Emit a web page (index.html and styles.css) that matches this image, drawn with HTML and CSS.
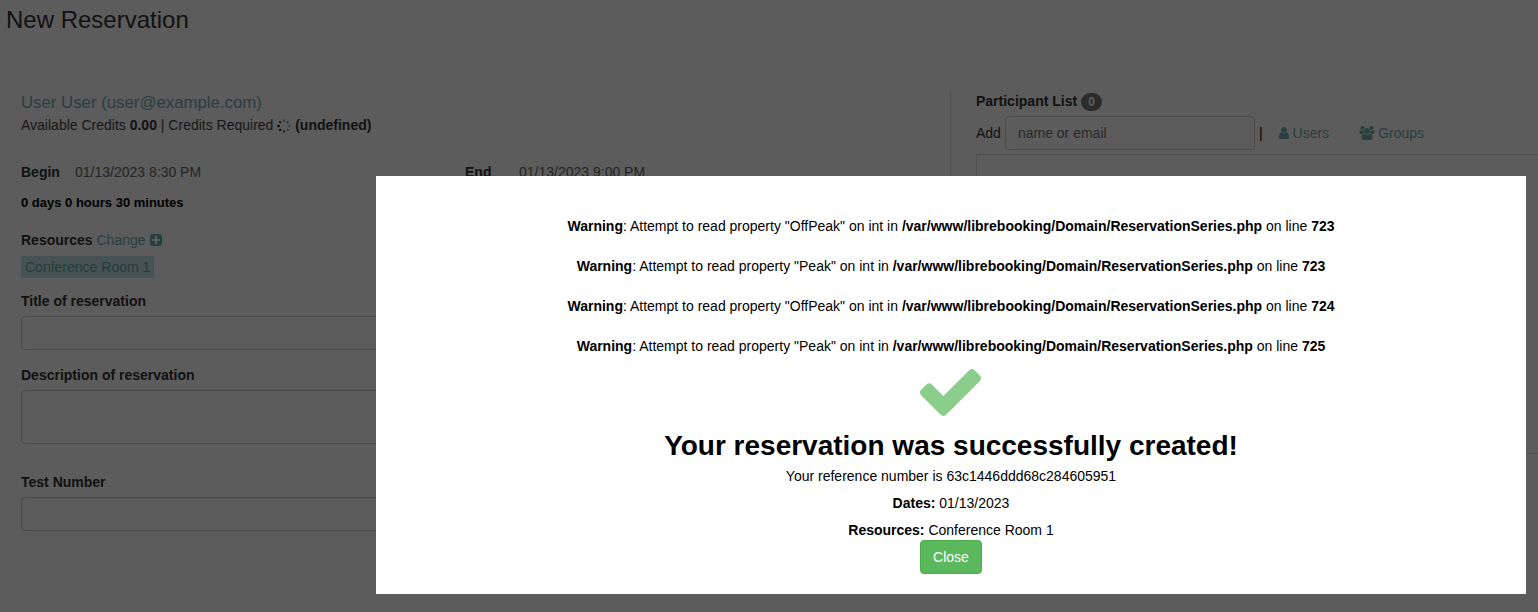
FILE: index.html
```html
<!DOCTYPE html>
<html lang="en">
<head>
    <meta charset="UTF-8">
    <title>New Reservation</title>
    <link rel="stylesheet" href="styles.css">
</head>
<body>
    <div class="page">
        <h1>New Reservation</h1>

        <div class="reservation">
            <div class="details">
                <div class="user-name">User User (user@example.com)</div>
                <div class="credits">
                    Available Credits <b>0.00</b> | Credits Required
                    <svg class="spinner" viewBox="0 0 16 16">
                        <circle cx="8" cy="1.8" r="1.2" fill="#777"/>
                        <circle cx="12.4" cy="3.6" r="1.2" fill="#888"/>
                        <circle cx="14.2" cy="8" r="1.2" fill="#888"/>
                        <circle cx="12.4" cy="12.4" r="1.2" fill="#777"/>
                        <circle cx="8" cy="14.2" r="1.3" fill="#333"/>
                        <circle cx="3.6" cy="12.4" r="1.4" fill="#111"/>
                        <circle cx="1.8" cy="8" r="1.4" fill="#000"/>
                        <circle cx="3.6" cy="3.6" r="1.3" fill="#333"/>
                    </svg>
                    <b>(undefined)</b>
                </div>

                <div class="dates">
                    <div class="date"><label>Begin</label><span>01/13/2023 8:30 PM</span></div>
                    <div class="date"><label>End</label><span>01/13/2023 9:00 PM</span></div>
                </div>
                <div class="duration">0 days 0 hours 30 minutes</div>

                <div class="resources">
                    <label>Resources</label>
                    <a href="#">Change</a>
                    <svg class="icon" viewBox="0 0 1792 1792"><path d="M1408 960v-128q0-26-19-45t-45-19h-320v-320q0-26-19-45t-45-19h-128q-26 0-45 19t-19 45v320h-320q-26 0-45 19t-19 45v128q0 26 19 45t45 19h320v320q0 26 19 45t45 19h128q26 0 45-19t19-45v-320h320q26 0 45-19t19-45zm256-544v960q0 119-84.5 203.5t-203.5 84.5h-960q-119 0-203.5-84.5t-84.5-203.5v-960q0-119 84.5-203.5t203.5-84.5h960q119 0 203.5 84.5t84.5 203.5z"/></svg>
                </div>
                <div class="tag">Conference Room 1</div>

                <div class="field title-field">
                    <label>Title of reservation</label>
                    <input type="text" class="form-control">
                </div>
                <div class="field">
                    <label>Description of reservation</label>
                    <textarea class="form-control"></textarea>
                </div>
                <div class="field test-field">
                    <label>Test Number</label>
                    <input type="text" class="form-control">
                </div>
            </div>

            <div class="participants">
                <div class="participant-title"><label>Participant List</label><span class="badge">0</span></div>
                <div class="participant-add">
                    <span>Add</span>
                    <input type="text" class="form-control add-input" placeholder="name or email">
                    <span class="divider">|</span>
                    <a href="#" class="users-link">
                        <svg class="icon" viewBox="0 0 1792 1792"><path d="M1536 1399q0 109-62.5 187t-150.5 78h-854q-88 0-150.5-78t-62.5-187q0-85 8.5-160.5t31.5-152 58.5-131 94-89 134.5-34.5q131 128 313 128t313-128q76 0 134.5 34.5t94 89 58.5 131 31.5 152 8.5 160.5zm-256-887q0 159-112.5 271.5t-271.5 112.5-271.5-112.5-112.5-271.5 112.5-271.5 271.5-112.5 271.5 112.5 112.5 271.5z"/></svg>Users</a>
                    <a href="#" class="groups-link">
                        <svg class="icon icon-wide" viewBox="0 0 2048 1792"><path d="M657 896q-162 5-265 128h-134q-82 0-138-40.5t-56-118.5q0-353 124-353 6 0 43.5 21t97.5 42.5 119 21.5q67 0 133-23-5 37-5 66 0 139 81 256zm1071 637q0 120-73 189.5t-194 69.5h-874q-121 0-194-69.5t-73-189.5q0-53 3.5-103.5t14-109 26.5-108.5 43-97.5 62-81 85.5-53.5 111.5-20q10 0 43 21.5t73 48 107 48 135 21.5 135-21.5 107-48 73-48 43-21.5q61 0 111.5 20t85.5 53.5 62 81 43 97.5 26.5 108.5 14 109 3.5 103.5zm-1024-1277q0 106-75 181t-181 75-181-75-75-181 75-181 181-75 181 75 75 181zm704 384q0 159-112.5 271.5t-271.5 112.5-271.5-112.5-112.5-271.5 112.5-271.5 271.5-112.5 271.5 112.5 112.5 271.5zm576 225q0 78-56 118.5t-138 40.5h-134q-103-123-265-128 81-117 81-256 0-29-5-66 66 23 133 23 59 0 119-21.5t97.5-42.5 43.5-21q124 0 124 353zm-128-609q0 106-75 181t-181 75-181-75-75-181 75-181 181-75 181 75 75 181z"/></svg>Groups</a>
                </div>
                <div class="participant-box"></div>
            </div>
        </div>
    </div>

    <div class="overlay"></div>

    <div class="modal">
        <p><b>Warning</b>: Attempt to read property "OffPeak" on int in <b>/var/www/librebooking/Domain/ReservationSeries.php</b> on line <b>723</b></p>
        <p><b>Warning</b>: Attempt to read property "Peak" on int in <b>/var/www/librebooking/Domain/ReservationSeries.php</b> on line <b>723</b></p>
        <p><b>Warning</b>: Attempt to read property "OffPeak" on int in <b>/var/www/librebooking/Domain/ReservationSeries.php</b> on line <b>724</b></p>
        <p><b>Warning</b>: Attempt to read property "Peak" on int in <b>/var/www/librebooking/Domain/ReservationSeries.php</b> on line <b>725</b></p>
        <svg class="check" viewBox="121 334 1550 1188"><path d="M1671 566q0 40-28 68l-724 724-136 136q-28 28-68 28t-68-28l-136-136-362-362q-28-28-28-68t28-68l136-136q28-28 68-28t68 28l294 295 656-657q28-28 68-28t68 28l136 136q28 28 28 68z"/></svg>
        <h2>Your reservation was successfully created!</h2>
        <div class="result-line">Your reference number is 63c1446ddd68c284605951</div>
        <div class="result-line"><b>Dates:</b> 01/13/2023</div>
        <div class="result-line"><b>Resources:</b> Conference Room 1</div>
        <button class="btn-close">Close</button>
    </div>
</body>
</html>
```

FILE: styles.css
```css
* {
    box-sizing: border-box;
}
html, body {
    height: 100%;
    overflow: hidden;
}
body {
    margin: 0;
    font-family: "Liberation Sans", Arial, sans-serif;
    font-size: 14px;
    line-height: 20px;
    color: #333;
    background-color: #fff;
}
a {
    color: #70b0b0;
    text-decoration: none;
}
label {
    font-weight: bold;
}
h1 {
    margin: 0;
    padding: 6px 0 0 6px;
    font-size: 24px;
    line-height: 28px;
    font-weight: normal;
    color: #333;
}
.reservation {
    display: grid;
    grid-template-columns: 950px 1fr;
    margin-top: 56px;
}
.details {
    padding: 1px 0 0 21px;
}
.user-name {
    font-size: 16.8px;
    line-height: 24px;
    color: #70b0b0;
}
.credits {
    color: #444;
}
.credits b {
    color: #333;
}
.spinner {
    width: 14px;
    height: 14px;
    vertical-align: -3px;
}
.dates {
    display: grid;
    grid-template-columns: 444px 1fr;
    margin-top: 27px;
}
.date label {
    display: inline-block;
    width: 54px;
}
.date span {
    color: #666;
}
.duration {
    margin-top: 11px;
    font-size: 13px;
    font-weight: bold;
    color: #000;
}
.resources {
    margin-top: 17px;
}
.icon {
    width: 14px;
    height: 14px;
    vertical-align: -2px;
    fill: #70b0b0;
}
.icon-wide {
    width: 16px;
}
.tag {
    display: inline-block;
    margin-top: 6px;
    padding: 1px 4px;
    border-radius: 2px;
    font-size: 14px;
    background-color: #c4e6e2;
    color: #60a8a8;
}
.field {
    margin-top: 15px;
    width: 900px;
}
.field label {
    display: block;
    margin-bottom: 5px;
}
.title-field {
    margin-top: 13px;
}
.test-field {
    margin-top: 28px;
}
.form-control {
    display: block;
    width: 100%;
    height: 34px;
    padding: 6px 12px;
    font-family: inherit;
    font-size: 14px;
    color: #555;
    background-color: #fff;
    border: 1px solid #ccc;
    border-radius: 4px;
}
textarea.form-control {
    height: 54px;
    margin-bottom: 10px;
}
.participants {
    height: 500px;
    padding: 0 0 0 25px;
    border-left: 1px solid #ddd;
}
.participant-title {
    margin-top: 1px;
}
.badge {
    display: inline-block;
    min-width: 21px;
    margin-left: 4px;
    padding: 3px 7px;
    font-size: 12px;
    line-height: 12px;
    font-weight: bold;
    text-align: center;
    color: #fff;
    background-color: #777;
    border-radius: 10px;
}
.participant-add {
    display: flex;
    align-items: center;
    margin-top: 5px;
}
.add-input {
    width: 250px;
    margin-left: 4px;
}
.divider {
    margin-left: 4px;
    color: #000;
}
.users-link {
    margin-left: 14px;
}
.groups-link {
    margin-left: 30px;
}
.participant-add .icon {
    margin-right: 2px;
}
.participant-add .icon-wide {
    margin-right: 3px;
}
.participant-box {
    height: 300px;
    margin-top: 4px;
    border: 1px solid #ddd;
    border-right: 0;
}
.overlay {
    position: fixed;
    top: 0;
    right: 0;
    bottom: 0;
    left: 0;
    background-color: rgba(0, 0, 0, 0.64);
}
.modal {
    position: fixed;
    top: 176px;
    left: 376px;
    width: 1150px;
    height: 418px;
    padding-top: 20px;
    text-align: center;
    color: #000;
    background-color: #fff;
}
.modal p {
    margin: 20px 0;
}
.check {
    display: block;
    width: 61px;
    height: 47px;
    margin: -7px 0 0 544px;
    fill: #8bcd8b;
}
h2 {
    margin: 10px 0 0;
    font-size: 28px;
    line-height: 40px;
    font-weight: bold;
}
.result-line {
    margin-bottom: 7px;
}
.btn-close {
    display: block;
    width: 62px;
    height: 34px;
    margin: -7px auto 0;
    padding: 0;
    font-family: inherit;
    font-size: 14px;
    color: #fff;
    background-color: #5cb85c;
    border: 1px solid #4cae4c;
    border-radius: 4px;
}
```
